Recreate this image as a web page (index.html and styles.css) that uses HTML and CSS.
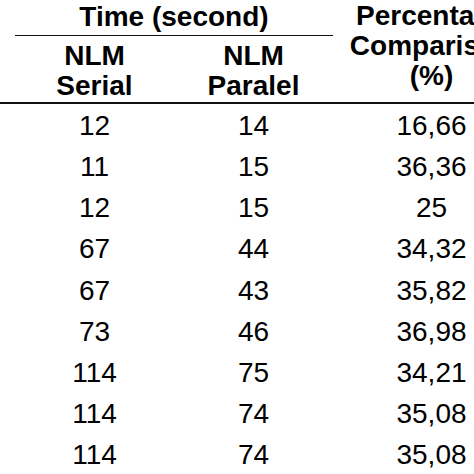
FILE: index.html
```html
<!DOCTYPE html>
<html>
<head>
<meta charset="utf-8">
<link rel="stylesheet" href="styles.css">
</head>
<body>
<div class="table">
  <div class="head">
    <div class="corner"></div>
    <div class="group">Time (second)</div>
    <div class="pct">Percentage<br>Comparison<br>(%)</div>
    <div class="sub">NLM<br>Serial</div>
    <div class="sub">NLM<br>Paralel</div>
  </div>
  <div class="body">
    <div></div><div class="num">12</div><div class="num">14</div><div class="num">16,66</div>
    <div></div><div class="num">11</div><div class="num">15</div><div class="num">36,36</div>
    <div></div><div class="num">12</div><div class="num">15</div><div class="num">25</div>
    <div></div><div class="num">67</div><div class="num">44</div><div class="num">34,32</div>
    <div></div><div class="num">67</div><div class="num">43</div><div class="num">35,82</div>
    <div></div><div class="num">73</div><div class="num">46</div><div class="num">36,98</div>
    <div></div><div class="num">114</div><div class="num">75</div><div class="num">34,21</div>
    <div></div><div class="num">114</div><div class="num">74</div><div class="num">35,08</div>
    <div></div><div class="num">114</div><div class="num">74</div><div class="num">35,08</div>
  </div>
</div>
</body>
</html>
```
FILE: styles.css
```css
html, body {
  margin: 0;
  padding: 0;
  overflow: hidden;
  background: #ffffff;
}
body {
  width: 474px;
  height: 474px;
  font-family: "Liberation Sans", Arial, sans-serif;
  color: #000;
}
.table {
  width: 530px;
}
.head, .body {
  display: grid;
  grid-template-columns: 15px 159px 159px 197px;
}
.head {
  font-weight: bold;
  font-size: 28px;
  line-height: 30px;
  text-align: center;
}
.corner {
  grid-column: 1;
  grid-row: 1 / span 2;
  border-bottom: 2px solid #111;
}
.group {
  grid-column: 2 / span 2;
  grid-row: 1;
  height: 35px;
  padding-top: 2px;
  box-sizing: border-box;
  border-bottom: 1px solid #111;
  height: 36px;
}
.pct {
  grid-column: 4;
  grid-row: 1 / span 2;
  padding-top: 1px;
  border-bottom: 2px solid #111;
  white-space: nowrap;
}
.sub {
  grid-row: 2;
  padding-top: 5px;
  padding-bottom: 1px;
  border-bottom: 2px solid #111;
}
.body {
  padding-top: 1px;
  font-size: 28px;
  line-height: 41.15px;
  text-align: center;
}
.num {
  white-space: nowrap;
}
```
